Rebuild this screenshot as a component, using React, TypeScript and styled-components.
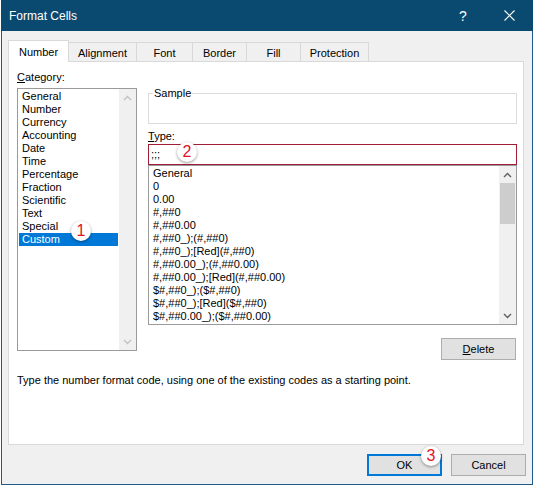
import React from "react";
import styled, { createGlobalStyle } from "styled-components";

const GlobalStyle = createGlobalStyle`
  html, body {
    margin: 0;
    padding: 0;
    background: #ffffff;
  }
  body {
    font-family: "Liberation Sans", Arial, sans-serif;
    font-size: 11px;
    color: #000;
  }
`;

const Window = styled.div`
  width: 532px;
  height: 485px;
  margin-left: 1px;
  box-sizing: border-box;
  border: 1px solid #1f5a88;
  border-top: none;
  background: #f0f0f0;
  display: flex;
  flex-direction: column;
`;

const TitleBar = styled.div`
  height: 31px;
  background: #0a4a70;
  color: #fff;
  display: flex;
  align-items: center;
  padding-left: 8px;
  font-size: 12px;
  margin: 0 -1px;
  padding-right: 1px;
`;

const TitleText = styled.span`
  flex: 1;
  margin-top: 1px;
`;

const CaptionButton = styled.div`
  width: 46px;
  height: 31px;
  display: flex;
  align-items: center;
  justify-content: center;
  font-size: 14px;
  color: #fff;
`;

const Body = styled.div`
  flex: 1;
  padding: 9px 8px 0 6px;
  display: flex;
  flex-direction: column;
`;

const TabStrip = styled.div`
  display: flex;
  align-items: flex-end;
  height: 22px;
  margin-bottom: -1px;
  position: relative;
  z-index: 1;
`;

const Tab = styled.div<{ $w: number; $active?: boolean }>`
  width: ${(p) => p.$w}px;
  height: ${(p) => (p.$active ? 22 : 20)}px;
  box-sizing: border-box;
  border: 1px solid #d9d9d9;
  border-bottom: ${(p) => (p.$active ? "none" : "1px solid #d9d9d9")};
  background: ${(p) => (p.$active ? "#ffffff" : "#f0f0f0")};
  margin-right: -1px;
  display: flex;
  align-items: center;
  justify-content: center;
  padding-top: ${(p) => (p.$active ? 0 : 2)}px;
  position: relative;
  z-index: ${(p) => (p.$active ? 2 : 1)};
`;

const Panel = styled.div`
  height: 384px;
  box-sizing: border-box;
  background: #ffffff;
  border: 1px solid #d9d9d9;
  padding: 9px 0 0 8px;
  display: grid;
  grid-template-columns: 120px 369px;
  grid-template-rows: auto auto;
  column-gap: 11px;
  align-content: start;
`;

const Column = styled.div`
  display: flex;
  flex-direction: column;
`;

const Label = styled.div<{ $gap?: number }>`
  line-height: 13px;
  height: 13px;
  white-space: nowrap;
  margin-top: ${(p) => p.$gap ?? 0}px;
  margin-bottom: ${(p) => (p.$gap ? 0 : 4)}px;
`;

const ListBox = styled.div<{ $h: number }>`
  position: relative;
  height: ${(p) => p.$h}px;
  box-sizing: border-box;
  border: 1px solid #9a9a9a;
  background: #fff;
  display: flex;
`;

const Items = styled.div<{ $top?: number }>`
  flex: 1;
  padding: ${(p) => p.$top ?? 1}px 1px 0 1px;
  overflow: hidden;
`;

const Row = styled.div<{ $selected?: boolean }>`
  height: 13px;
  line-height: 13px;
  padding-left: 3px;
  white-space: nowrap;
  background: ${(p) => (p.$selected ? "#0078d7" : "transparent")};
  color: ${(p) => (p.$selected ? "#fff" : "#000")};
`;

const ScrollBar = styled.div`
  width: 17px;
  background: #f0f0f0;
  display: flex;
  flex-direction: column;
`;

const ArrowButton = styled.div`
  height: 17px;
  display: flex;
  align-items: center;
  justify-content: center;
`;

const Track = styled.div`
  flex: 1;
`;

const Thumb = styled.div`
  height: 41px;
  margin: 0 1px;
  background: #cdcdcd;
`;

const SampleBox = styled.div`
  margin-top: 22px;
  height: 31px;
  box-sizing: border-box;
  border: 1px solid #dcdcdc;
`;

const Legend = styled.span`
  display: inline-block;
  margin: -7px 0 0 4px;
  padding: 0 1px;
  background: #fff;
  line-height: 13px;
  vertical-align: top;
`;

const TypeInput = styled.div`
  position: relative;
  margin-top: 1px;
  height: 21px;
  box-sizing: border-box;
  border: 1px solid #a11d36;
  padding-left: 2px;
  line-height: 19px;
`;

const ButtonBase = styled.div<{ $focused?: boolean }>`
  position: relative;
  width: 75px;
  height: 22px;
  box-sizing: border-box;
  background: #e1e1e1;
  border: ${(p) => (p.$focused ? "2px solid #0078d7" : "1px solid #adadad")};
  display: flex;
  align-items: center;
  justify-content: center;
`;

const DeleteButton = styled(ButtonBase)`
  align-self: flex-end;
  margin-top: 13px;
  margin-right: 1px;
`;

const Description = styled.div`
  grid-column: 1 / -1;
  margin-top: 14px;
  line-height: 13px;
`;

const ButtonRow = styled.div`
  display: flex;
  justify-content: flex-end;
  gap: 9px;
  margin: 9px -2px 0 0;
`;

const Badge = styled.div<{ $x: number; $y: number }>`
  position: absolute;
  left: ${(p) => p.$x}px;
  top: ${(p) => p.$y}px;
  width: 20px;
  height: 20px;
  border-radius: 50%;
  background: #fff;
  box-shadow: 0 1px 3px rgba(0, 0, 0, 0.4);
  color: #e3141c;
  font-size: 16px;
  line-height: 20px;
  text-align: center;
  z-index: 5;
`;

const Chevron = ({ up, color }: { up?: boolean; color: string }) => (
  <svg width="9" height="6" viewBox="0 0 9 6">
    <path
      d={up ? "M1 5 L4.5 1.5 L8 5" : "M1 1 L4.5 4.5 L8 1"}
      fill="none"
      stroke={color}
      strokeWidth="1.4"
    />
  </svg>
);

const categories = [
  "General",
  "Number",
  "Currency",
  "Accounting",
  "Date",
  "Time",
  "Percentage",
  "Fraction",
  "Scientific",
  "Text",
  "Special",
  "Custom",
];

const formats = [
  "General",
  "0",
  "0.00",
  "#,##0",
  "#,##0.00",
  "#,##0_);(#,##0)",
  "#,##0_);[Red](#,##0)",
  "#,##0.00_);(#,##0.00)",
  "#,##0.00_);[Red](#,##0.00)",
  "$#,##0_);($#,##0)",
  "$#,##0_);[Red]($#,##0)",
  "$#,##0.00_);($#,##0.00)",
];

const tabs = [
  { name: "Number", w: 61 },
  { name: "Alignment", w: 69 },
  { name: "Font", w: 57 },
  { name: "Border", w: 55 },
  { name: "Fill", w: 55 },
  { name: "Protection", w: 69 },
];

export default function App() {
  return (
    <>
      <GlobalStyle />
      <Window>
        <TitleBar>
          <TitleText>Format Cells</TitleText>
          <CaptionButton>?</CaptionButton>
          <CaptionButton>
            <svg width="11" height="11" viewBox="0 0 11 11">
              <path d="M0.5 0.5 L10.5 10.5 M10.5 0.5 L0.5 10.5" stroke="#fff" strokeWidth="1.1" />
            </svg>
          </CaptionButton>
        </TitleBar>
        <Body>
          <TabStrip>
            {tabs.map((t, i) => (
              <Tab key={t.name} $w={t.w} $active={i === 0}>
                {t.name}
              </Tab>
            ))}
          </TabStrip>
          <Panel>
            <Column>
              <Label>
                <u>C</u>ategory:
              </Label>
              <ListBox $h={263}>
                <Items>
                  {categories.map((c) => (
                    <Row key={c} $selected={c === "Custom"}>
                      {c}
                    </Row>
                  ))}
                </Items>
                <ScrollBar>
                  <ArrowButton>
                    <Chevron up color="#c2c2c2" />
                  </ArrowButton>
                  <Track />
                  <ArrowButton>
                    <Chevron color="#c2c2c2" />
                  </ArrowButton>
                </ScrollBar>
                <Badge $x={53} $y={132}>1</Badge>
              </ListBox>
            </Column>
            <Column>
              <SampleBox>
                <Legend>Sample</Legend>
              </SampleBox>
              <Label $gap={6}>
                <u>T</u>ype:
              </Label>
              <TypeInput>
                ;;;
                <Badge $x={28} $y={-3}>2</Badge>
              </TypeInput>
              <ListBox $h={160}>
                <Items $top={1}>
                  {formats.map((f) => (
                    <Row key={f}>{f}</Row>
                  ))}
                </Items>
                <ScrollBar>
                  <ArrowButton>
                    <Chevron up color="#606060" />
                  </ArrowButton>
                  <Track>
                    <Thumb />
                  </Track>
                  <ArrowButton>
                    <Chevron color="#606060" />
                  </ArrowButton>
                </ScrollBar>
              </ListBox>
              <DeleteButton>
                <span>
                  <u>D</u>elete
                </span>
              </DeleteButton>
            </Column>
            <Description>
              Type the number format code, using one of the existing codes as a starting point.
            </Description>
          </Panel>
          <ButtonRow>
            <ButtonBase $focused>
              OK
              <Badge $x={52} $y={-10}>3</Badge>
            </ButtonBase>
            <ButtonBase>Cancel</ButtonBase>
          </ButtonRow>
        </Body>
      </Window>
    </>
  );
}
